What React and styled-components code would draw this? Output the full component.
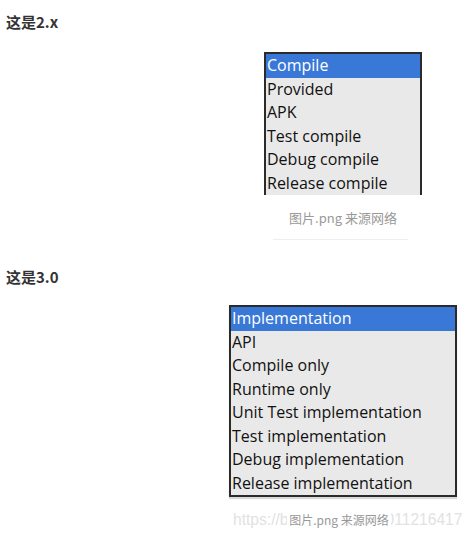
import React from "react";
import styled, { createGlobalStyle } from "styled-components";

const GlobalStyle = createGlobalStyle`
  body {
    margin: 0;
    background: #fff;
    font-family: "Noto Sans", "Noto Sans CJK SC", sans-serif;
  }
`;

const Page = styled.div`
  width: 474px;
  height: 537px;
  overflow: hidden;
  position: relative;
`;

const Heading = styled.h3`
  margin: 0;
  padding: ${(p) => p.$top}px 0 0 6px;
  height: ${(p) => p.$height}px;
  box-sizing: border-box;
  font-size: 15px;
  line-height: 18px;
  font-weight: bold;
  color: #333;
  font-family: "Noto Sans CJK SC", "Noto Sans", sans-serif;
`;

const Figure = styled.div`
  display: flex;
  flex-direction: column;
  align-items: center;
  padding-left: ${(p) => p.$offset}px;
`;

const ListBox = styled.ul`
  list-style: none;
  margin: 0;
  padding: 0;
  width: ${(p) => p.$width}px;
  box-sizing: border-box;
  border: 2px solid #2b2b2b;
  border-bottom: ${(p) => (p.$cut ? "none" : "2px solid #2b2b2b")};
  box-shadow: ${(p) => (p.$cut ? "none" : "0 2px 1px rgba(0,0,0,0.15)")};
  background: #e9e9e9;
`;

const Item = styled.li`
  height: 23.5px;
  line-height: 23.5px;
  padding-left: 1px;
  font-size: 16px;
  font-family: "Open Sans", "Noto Sans", sans-serif;
  color: ${(p) => (p.$selected ? "#fff" : "#111")};
  background: ${(p) => (p.$selected ? "#3a78d8" : "transparent")};
  white-space: nowrap;
`;

const CaptionRow = styled.div`
  position: relative;
  height: ${(p) => p.$height}px;
  width: 262px;
  display: flex;
  justify-content: center;
  align-items: flex-start;
`;

const Caption = styled.span`
  position: relative;
  z-index: 1;
  margin-top: ${(p) => p.$top}px;
  margin-right: ${(p) => p.$shift || 0}px;
  padding: 0 2px;
  background: #fff;
  font-size: ${(p) => p.$size}px;
  line-height: 16px;
  color: #999;
  font-family: "Noto Sans CJK SC", "Noto Sans", sans-serif;
`;

const Watermark = styled.span`
  position: absolute;
  left: 21px;
  top: ${(p) => p.$top}px;
  font-size: 15.6px;
  line-height: 20px;
  color: #e2e2e2;
  font-family: "Liberation Sans", sans-serif;
  white-space: nowrap;
`;

const Rule = styled.div`
  width: 135px;
  height: 1px;
  background: #eee;
  margin-top: 14px;
  margin-left: -5px;
`;

const oldScopes = ["Compile", "Provided", "APK", "Test compile", "Debug compile", "Release compile"];
const newScopes = [
  "Implementation",
  "API",
  "Compile only",
  "Runtime only",
  "Unit Test implementation",
  "Test implementation",
  "Debug implementation",
  "Release implementation",
];

export default function App() {
  return (
    <Page>
      <GlobalStyle />
      <Heading $top={13} $height={52}>这是2.x</Heading>
      <Figure $offset={212}>
        <ListBox $width={158} $cut>
          {oldScopes.map((s, i) => (
            <Item key={s} $selected={i === 0}>{s}</Item>
          ))}
        </ListBox>
        <CaptionRow $height={30}>
          <Caption $top={15} $size={13}>图片.png 来源网络</Caption>
        </CaptionRow>
        <Rule />
      </Figure>
      <Heading $top={28} $height={65}>这是3.0</Heading>
      <Figure $offset={212}>
        <ListBox $width={228}>
          {newScopes.map((s, i) => (
            <Item key={s} $selected={i === 0}>{s}</Item>
          ))}
        </ListBox>
        <CaptionRow $height={38}>
          <Watermark $top={13}>https://blog.csdn.net/u011216417</Watermark>
          <Caption $top={15} $size={12} $shift={8}>图片.png 来源网络</Caption>
        </CaptionRow>
      </Figure>
    </Page>
  );
}
